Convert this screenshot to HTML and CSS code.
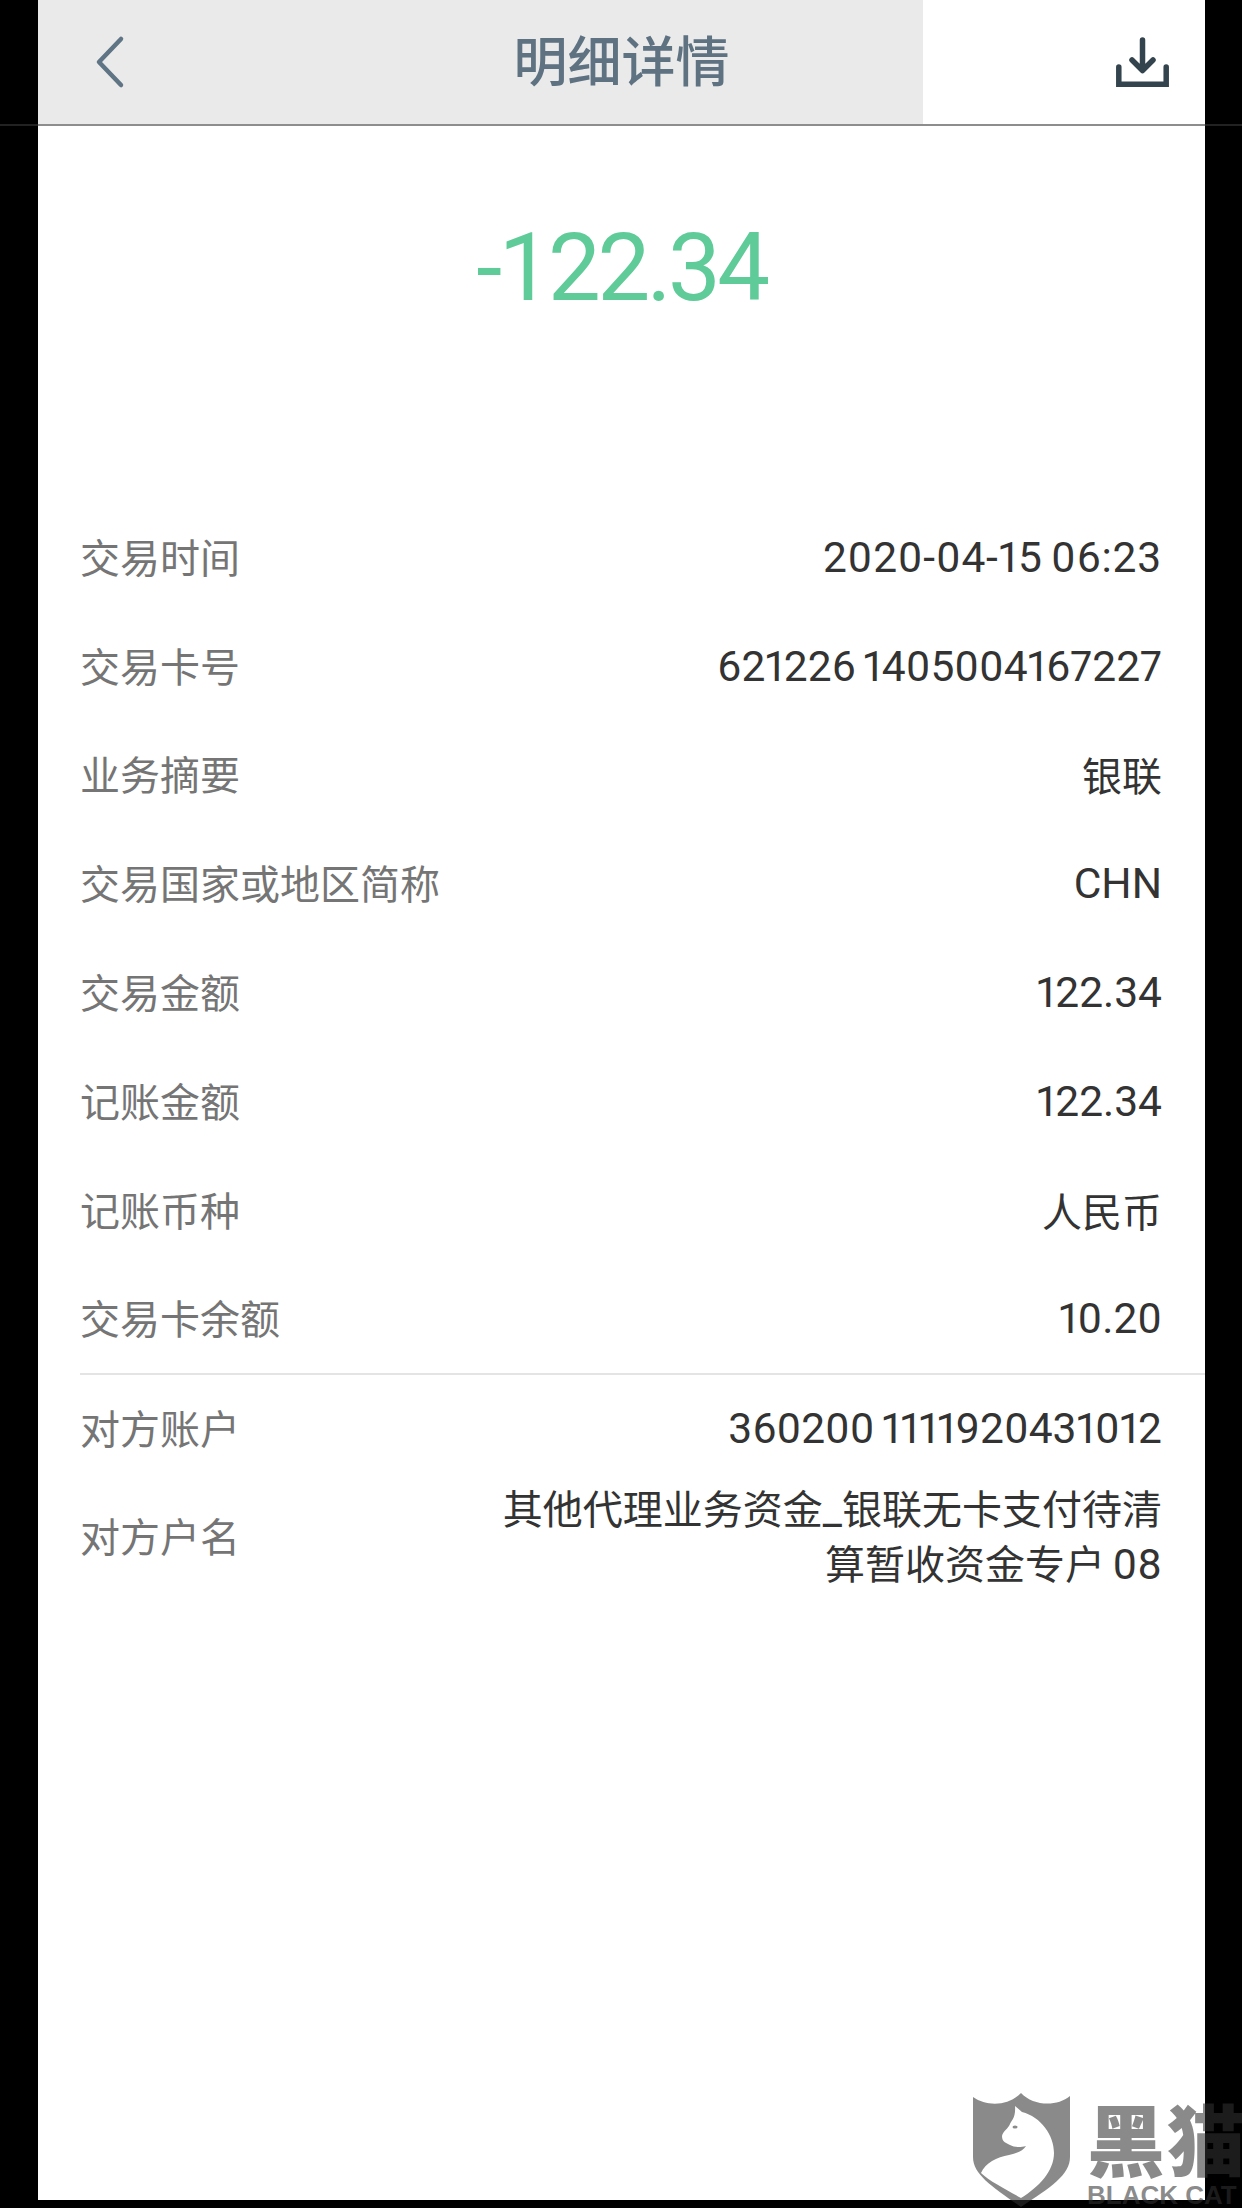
FILE: index.html
```html
<!DOCTYPE html>
<html lang="zh-CN">
<head>
<meta charset="utf-8">
<title>明细详情</title>
<link rel="stylesheet" href="styles.css">
</head>
<body>
<div class="screen">
  <header class="header">
    <div class="nav">
      <svg class="back" width="40" height="60" viewBox="0 0 40 60"><path d="M27 6 L5 29 L27 52" fill="none" stroke="#5f7484" stroke-width="4.500" stroke-linecap="round" stroke-linejoin="round"/></svg>
      <h1 class="title">明细详情</h1>
    </div>
    <div class="actions">
      <svg width="53" height="50" viewBox="0 0 53 50"><path d="M26.500 3 V33 M16 23 L26.500 33.500 L37 23" fill="none" stroke="#34444f" stroke-width="5.500" stroke-linecap="round" stroke-linejoin="round"/><path d="M2.800 30 V47.300 H50.200 V30" fill="none" stroke="#34444f" stroke-width="5.500" stroke-linecap="round"/></svg>
    </div>
  </header>
  <div class="rule"></div>
  <main class="content">
    <div class="amount">-122.34</div>
    <section class="list list-first">
      <div class="row"><span class="label">交易时间</span><span class="value num num-date">2020-04-15 06:23</span></div>
      <div class="row"><span class="label">交易卡号</span><span class="value num">621226 1405004167227</span></div>
      <div class="row"><span class="label">业务摘要</span><span class="value">银联</span></div>
      <div class="row"><span class="label">交易国家或地区简称</span><span class="value num">CHN</span></div>
      <div class="row"><span class="label">交易金额</span><span class="value num">122.34</span></div>
      <div class="row"><span class="label">记账金额</span><span class="value num">122.34</span></div>
      <div class="row"><span class="label">记账币种</span><span class="value">人民币</span></div>
      <div class="row"><span class="label">交易卡余额</span><span class="value num">10.20</span></div>
    </section>
    <section class="list">
      <div class="row row-account"><span class="label">对方账户</span><span class="value num">360200 1111920431012</span></div>
      <div class="row row-wrap"><span class="label">对方户名</span><span class="value value-wrap">其他代理业务资金<span class="num">_</span>银联无卡支付待清 算暂收资金专户<span class="num"> 08</span></span></div>
    </section>
  </main>
  <div class="watermark">
    <svg class="shield" width="97" height="114" viewBox="0 0 97 114">
      <path d="M0 4 C14 14 36 13 48 0 C60 13 84 14 97 3 V64 C97 82 78 94 48 114 C20 94 0 82 0 64 Z" fill="rgba(49,49,49,.57)"/>
      <path d="M42 13 L49 19 C68 24 81 42 81 60 C81 78 66 94 48 105 C34 97 16 88 8 80 C12 70 24 64 36 62 C44 60 50 58 53 53 C46 55 41 54 37 52 C33 50 29 49 29 43 C30 38 35 36 37 31 C38 28 43 25 42 13 Z" fill="#fff"/>
      <ellipse cx="42" cy="34" rx="2.500" ry="1.500" fill="#8a8a8a"/>
    </svg>
    <div class="brand">
      <span class="brand-cn">黑猫</span>
      <span class="brand-en">BLACK CAT</span>
    </div>
  </div>
</div>
</body>
</html>
```
FILE: styles.css
```css
* { box-sizing: border-box; }
html, body { margin: 0; padding: 0; background: #000; }
body { width: 1242px; height: 2208px; overflow: hidden; font-family: Roboto, "Noto Sans CJK SC", sans-serif; }
.screen { position: relative; width: 1167px; height: 2200px; margin-left: 38px; background: #fff; display: flex; flex-direction: column; }
.header { display: flex; height: 124px; flex: none; }
.nav { width: 885px; background: #eaeaea; position: relative; display: flex; align-items: center; justify-content: center; padding: 0 0 6px 282px; }
.back { position: absolute; left: 56px; top: 33px; }
.title { margin: 0; font: 500 54px/1 "Noto Sans CJK SC", sans-serif; color: #5f7282; }
.actions { flex: 1; display: flex; align-items: flex-start; justify-content: flex-end; padding: 37px 36px 0 0; }
.rule { position: absolute; top: 124px; left: -38px; width: 1242px; height: 2px; background: rgba(58,58,58,.58); }
.content { flex: 1; display: flex; flex-direction: column; }
.amount { margin-top: 84px; text-align: center; font-weight: 400; font-size: 94px; line-height: 120px; color: #5fcb98; letter-spacing: -3.500px; }
.list { display: flex; flex-direction: column; margin-left: 42px; }
.list-first { margin-top: 175px; border-bottom: 2px solid #e4e4e4; }
.row { min-height: 108.800px; display: flex; align-items: center; justify-content: space-between; padding-right: 43px; }
.label { font: 400 40px/1.200 "Noto Sans CJK SC", sans-serif; color: #757575; margin-top: -3px; }
.value { font: 400 40px/53px "Noto Sans CJK SC", sans-serif; color: #333; text-align: right; }
.num { font-family: Roboto, sans-serif; font-size: 42.500px; font-variant-numeric: proportional-nums; word-spacing: -3px; }
.num-date { letter-spacing: 0.800px; }
.row-account { min-height: 106px; }
.row-wrap { min-height: 110px; }
.value-wrap { width: 670px; }
.watermark { position: absolute; left: 935px; top: 2093px; display: flex; gap: 17px; width: 270px; }
.shield { flex: none; }
.brand { display: flex; flex-direction: column; color: rgba(49,49,49,.57); width: 160px; flex: none; }
.brand-cn { font: 900 78px/82px "Noto Sans CJK SC", sans-serif; letter-spacing: 2px; white-space: nowrap; margin-top: 3px; }
.brand-en { font: 700 26px/28px "Liberation Sans", sans-serif; white-space: nowrap; margin-top: 3px; }
```
